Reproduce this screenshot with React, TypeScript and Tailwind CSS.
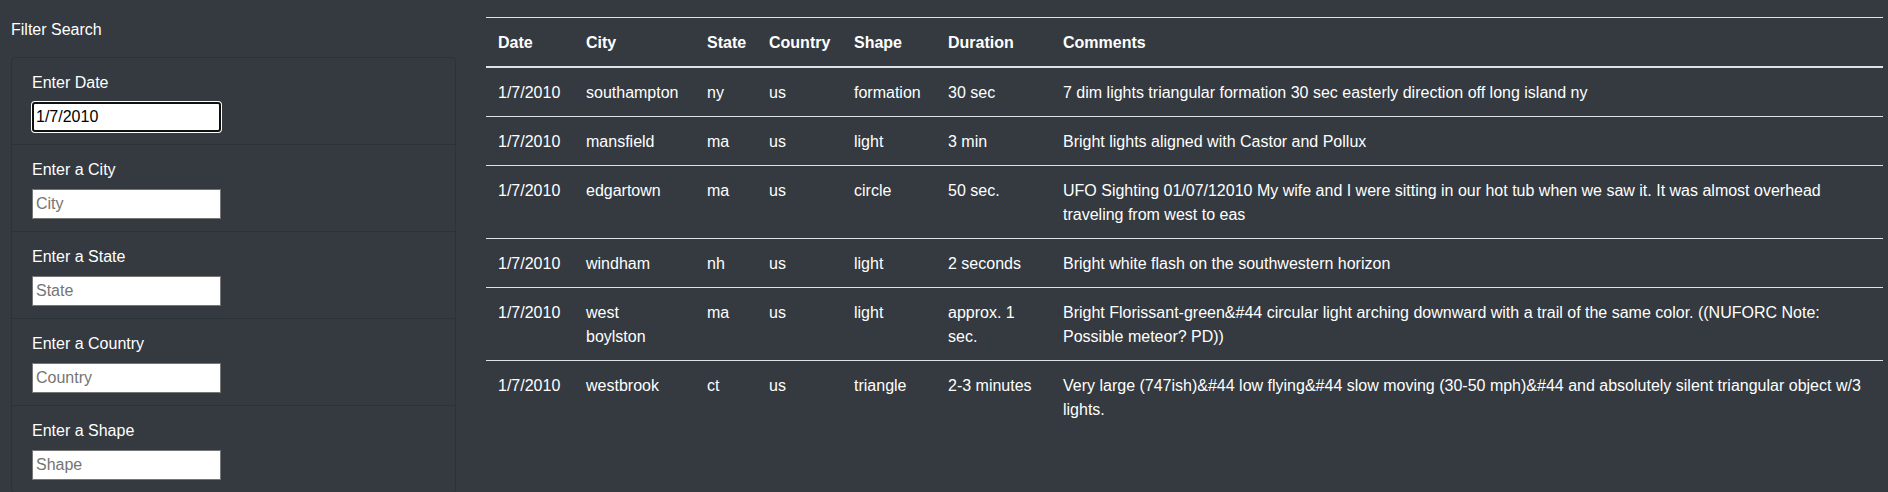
import React from 'react';

const filters = [
  { label: 'Enter Date', placeholder: '1/1/2010', value: '1/7/2010' },
  { label: 'Enter a City', placeholder: 'City' },
  { label: 'Enter a State', placeholder: 'State' },
  { label: 'Enter a Country', placeholder: 'Country' },
  { label: 'Enter a Shape', placeholder: 'Shape' },
];

const sightings = [
  {
    date: '1/7/2010',
    city: ['southampton'],
    state: 'ny',
    country: 'us',
    shape: 'formation',
    duration: '30 sec',
    comments: ['7 dim lights triangular formation 30 sec easterly direction off long island ny'],
  },
  {
    date: '1/7/2010',
    city: ['mansfield'],
    state: 'ma',
    country: 'us',
    shape: 'light',
    duration: '3 min',
    comments: ['Bright lights aligned with Castor and Pollux'],
  },
  {
    date: '1/7/2010',
    city: ['edgartown'],
    state: 'ma',
    country: 'us',
    shape: 'circle',
    duration: '50 sec.',
    comments: [
      'UFO Sighting 01/07/12010 My wife and I were sitting in our hot tub when we saw it. It was almost overhead',
      'traveling from west to eas',
    ],
  },
  {
    date: '1/7/2010',
    city: ['windham'],
    state: 'nh',
    country: 'us',
    shape: 'light',
    duration: '2 seconds',
    comments: ['Bright white flash on the southwestern horizon'],
  },
  {
    date: '1/7/2010',
    city: ['west', 'boylston'],
    state: 'ma',
    country: 'us',
    shape: 'light',
    duration: 'approx. 1 sec.',
    comments: [
      'Bright Florissant-green&#44 circular light arching downward with a trail of the same color. ((NUFORC Note:',
      'Possible meteor? PD))',
    ],
  },
  {
    date: '1/7/2010',
    city: ['westbrook'],
    state: 'ct',
    country: 'us',
    shape: 'triangle',
    duration: '2-3 minutes',
    comments: [
      'Very large (747ish)&#44 low flying&#44 slow moving (30-50 mph)&#44 and absolutely silent triangular object w/3',
      'lights.',
    ],
  },
];

const headers = ['Date', 'City', 'State', 'Country', 'Shape', 'Duration', 'Comments'];

function Lines({ lines }: { lines: string[] }) {
  return (
    <>
      {lines.map((line, j) => (
        <React.Fragment key={j}>
          {j > 0 && <br />}
          {line}
        </React.Fragment>
      ))}
    </>
  );
}

const td = 'px-3 pt-[13px] pb-[11px] align-top border-t border-[#dee2e6]';

export default function App() {
  return (
    <div className="min-h-screen bg-[#343a40] text-white flex font-['Liberation_Sans',Arial,sans-serif] text-base leading-6">
      {/* Filtros */}
      <aside className="w-[456px] shrink-0 pl-[11px] pt-[18px]">
        <p className="leading-6 mb-[15px]">Filter Search</p>
        <ul className="w-[445px] rounded border border-black/[0.125] divide-y divide-black/[0.125]">
          {filters.map((f, i) => (
            <li key={f.label} className="px-5 py-3">
              <label className="block pt-[1px] mb-[7px] leading-6">{f.label}</label>
              {i === 0 ? (
                <input
                  type="text"
                  defaultValue={f.value}
                  placeholder={f.placeholder}
                  className="block w-[189px] h-[30px] px-[2px] bg-white text-black border-2 border-[#101010] rounded-[3px] shadow-[0_0_0_1px_#fff] outline-none"
                />
              ) : (
                <input
                  type="text"
                  placeholder={f.placeholder}
                  className="block w-[189px] h-[30px] px-[3px] bg-white text-black border border-[#767676] placeholder:text-[#757575] outline-none"
                />
              )}
            </li>
          ))}
        </ul>
      </aside>

      {/* Tabela */}
      <main className="ml-[30px] w-[1397px] pt-[17px]">
        <table className="w-full table-fixed border-collapse">
          <colgroup>
            <col className="w-[88px]" />
            <col className="w-[121px]" />
            <col className="w-[62px]" />
            <col className="w-[85px]" />
            <col className="w-[94px]" />
            <col className="w-[115px]" />
            <col />
          </colgroup>
          <thead>
            <tr>
              {headers.map((h) => (
                <th
                  key={h}
                  className="px-3 pt-[13px] pb-[11px] text-left align-bottom font-bold whitespace-nowrap border-t border-b-2 border-[#dee2e6]"
                >
                  {h}
                </th>
              ))}
            </tr>
          </thead>
          <tbody>
            {sightings.map((s, i) => (
              <tr key={i}>
                <td className={td}>{s.date}</td>
                <td className={td}>
                  <Lines lines={s.city} />
                </td>
                <td className={td}>{s.state}</td>
                <td className={td}>{s.country}</td>
                <td className={td}>{s.shape}</td>
                <td className={td}>{s.duration}</td>
                <td className={td}>
                  <Lines lines={s.comments} />
                </td>
              </tr>
            ))}
          </tbody>
        </table>
      </main>
    </div>
  );
}
